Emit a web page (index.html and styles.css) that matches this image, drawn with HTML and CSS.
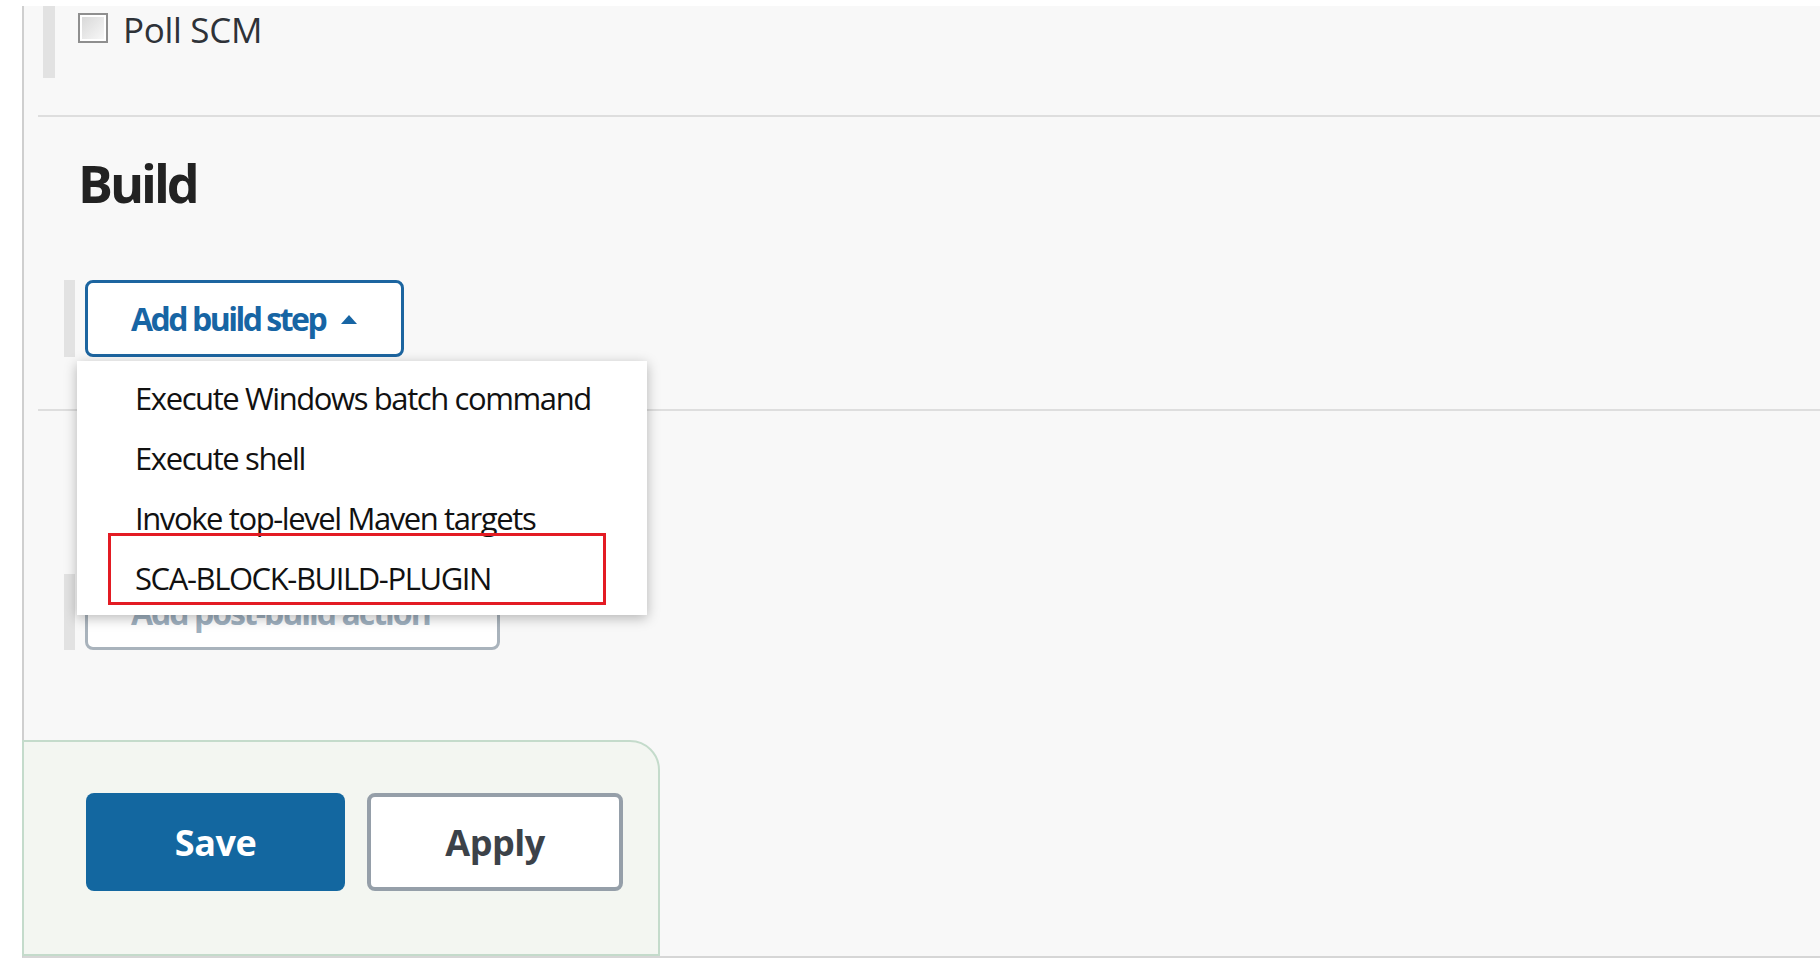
FILE: index.html
```html
<!DOCTYPE html>
<html lang="en">
<head>
    <meta charset="UTF-8">
    <title>Configure - Build</title>
    <link rel="stylesheet" href="styles.css">
</head>
<body>
    <div class="main">
        <div class="poll-row">
            <span class="checkbox"></span>
            <span class="poll-label">Poll SCM</span>
        </div>
        <div class="divider"></div>

        <h2 class="section-title">Build</h2>

        <div class="step-row">
            <div class="dropdown">
                <button class="btn-step">Add build step<span class="caret"></span></button>
                <ul class="menu">
                    <li>Execute Windows batch command</li>
                    <li>Execute shell</li>
                    <li>Invoke top-level Maven targets</li>
                    <li class="marked">SCA-BLOCK-BUILD-PLUGIN</li>
                </ul>
            </div>
        </div>
        <div class="divider second"></div>

        <div class="step-row post">
            <button class="btn-step disabled">Add post-build action</button>
        </div>

        <div class="bottom-bar">
            <button class="btn-save">Save</button>
            <button class="btn-apply">Apply</button>
        </div>
    </div>
</body>
</html>
```

FILE: styles.css
```css
body {
    margin: 0;
    background: #fff;
    font-family: "Open Sans", "Noto Sans", sans-serif;
    color: #1a1a1a;
}
.main {
    margin: 6px 0 0 22px;
    background: #f8f8f8;
    border-left: 2px solid #cfcfcf;
    border-bottom: 2px solid #d6d6d6;
}
.poll-row {
    margin-left: 19px;
    height: 72px;
    border-left: 12px solid #e2e2e2;
    display: flex;
    align-items: flex-start;
    padding-left: 23px;
}
.checkbox {
    width: 26px;
    height: 26px;
    margin-top: 7px;
    border: 2px solid #8f8f8f;
    background: linear-gradient(135deg, #d6d6d6, #fafafa);
    box-shadow: inset 0 0 0 2px #fff;
}
.poll-label {
    margin: 4px 0 0 15px;
    font-size: 35px;
    line-height: 40px;
    letter-spacing: -0.3px;
    color: #2e3238;
}
.divider {
    margin: 37px 0 0 14px;
    border-top: 2px solid #dedede;
}
.section-title {
    margin: 26px 0 0 54px;
    font-size: 52px;
    font-weight: 700;
    line-height: 80px;
    letter-spacing: -3px;
    color: #222;
}
.step-row {
    margin: 57px 0 0 40px;
    border-left: 11px solid #e2e2e2;
    padding-left: 10px;
    height: 77px;
}
.dropdown {
    position: relative;
    display: inline-block;
}
.btn-step {
    height: 77px;
    padding: 0 44px 0 43px;
    background: #fff;
    border: 3px solid #1c65a0;
    border-radius: 8px;
    font-family: inherit;
    font-size: 32px;
    font-weight: 700;
    color: #1765a4;
    letter-spacing: -2.5px;
    text-align: left;
}
.caret {
    display: inline-block;
    margin-left: 16px;
    vertical-align: middle;
    position: relative;
    top: -3px;
    border-left: 8px solid transparent;
    border-right: 8px solid transparent;
    border-bottom: 9px solid #1765a4;
}
.menu {
    position: absolute;
    top: 81px;
    left: -8px;
    width: 570px;
    margin: 0;
    padding: 7px 0 7px;
    list-style: none;
    background: #fff;
    box-shadow: 0 3px 12px rgba(0, 0, 0, 0.28);
    z-index: 2;
}
.menu li {
    position: relative;
    padding-left: 58px;
    height: 60px;
    line-height: 60px;
    font-size: 31px;
    letter-spacing: -1.4px;
    color: #111;
    white-space: nowrap;
}
.menu li.marked::after {
    content: "";
    position: absolute;
    left: 31px;
    top: -15px;
    width: 492px;
    height: 66px;
    border: 3px solid #e31b23;
}
.divider.second {
    margin-top: 52px;
}
.step-row.post {
    margin-top: 163px;
    height: 76px;
}
.btn-step.disabled {
    width: 415px;
    height: 76px;
    border-color: #a9b3bc;
    color: #9fb0bf;
    letter-spacing: -2px;
}
.bottom-bar {
    margin: 90px 0 0 -2px;
    width: 638px;
    height: 216px;
    box-sizing: border-box;
    background: #f3f6f1;
    border: 2px solid #c4dbcb;
    border-top-right-radius: 30px;
    display: flex;
    align-items: flex-start;
    gap: 22px;
    padding: 51px 0 0 62px;
}
.btn-save,
.btn-apply {
    height: 98px;
    border-radius: 8px;
    font-family: inherit;
    font-size: 36px;
    font-weight: 700;
    letter-spacing: -0.5px;
}
.btn-save {
    width: 259px;
    background: #1367a0;
    border: 0;
    color: #fff;
}
.btn-apply {
    width: 256px;
    background: #fff;
    border: 4px solid #959fa9;
    color: #3c4249;
}
```
